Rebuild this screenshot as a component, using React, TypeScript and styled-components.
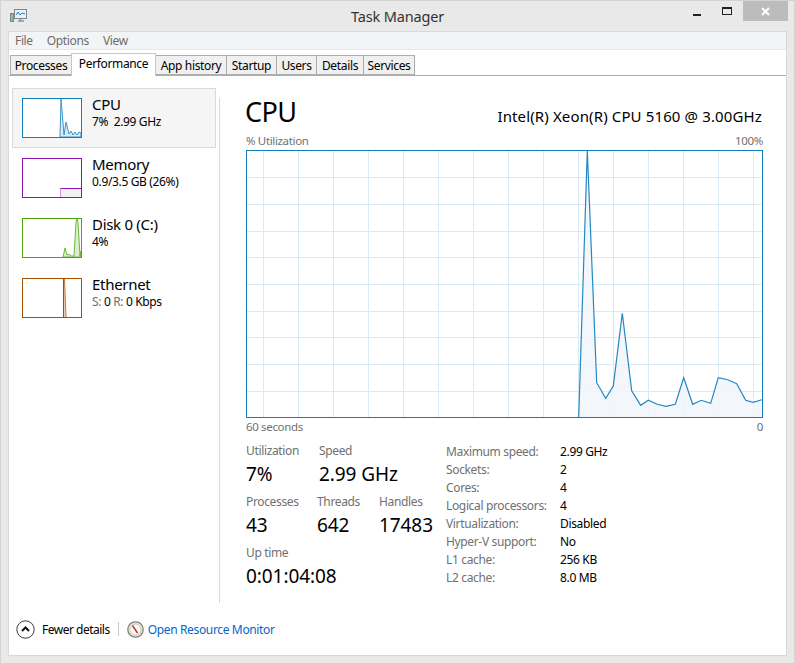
import React from "react";
import styled, { createGlobalStyle } from "styled-components";

const GlobalStyle = createGlobalStyle`
  html, body {
    margin: 0;
    padding: 0;
    background: #e9e9e9;
  }
  * {
    box-sizing: border-box;
  }
`;

const tabs = [
  { label: "Processes", width: 62 },
  { label: "Performance", width: 85, active: true },
  { label: "App history", width: 72 },
  { label: "Startup", width: 51 },
  { label: "Users", width: 41 },
  { label: "Details", width: 48 },
  { label: "Services", width: 52 },
];

const grid = {
  xs: [17, 52, 87, 122, 157, 192, 227, 262, 297, 332, 367, 402, 437, 472, 507],
  ys: [27, 54, 81, 107, 134, 161, 187, 214, 241],
};

// points read off the reference, relative to the inside of the chart
const cpuPoints =
  "332.7,267 341.3,0.7 350.7,232.7 359.7,248.3 367.3,236 376.3,163.3 385.7,240.7 394.7,255.3 402.3,250.3 411.3,254.3 420,256.3 429.3,254.3 437.7,227.7 446.7,254.3 455.3,250.3 464.7,253.3 472.3,227.7 481.7,229.7 490.7,233.7 499.7,250.3 507.3,252.3 515.7,249.7";

const stats = [
  ["Maximum speed:", "2.99 GHz"],
  ["Sockets:", "2"],
  ["Cores:", "4"],
  ["Logical processors:", "4"],
  ["Virtualization:", "Disabled"],
  ["Hyper-V support:", "No"],
  ["L1 cache:", "256 KB"],
  ["L2 cache:", "8.0 MB"],
];

const AppIcon = () => (
  <svg width="17" height="15" viewBox="0 0 17 15">
    <rect x="0.5" y="4.5" width="3" height="8" fill="#9fb59a" stroke="#7b8a80" />
    <rect x="4.5" y="0.5" width="12" height="9" fill="#e8f1f8" stroke="#7c8790" />
    <path d="M6 6l2-3 2 3 2-2 3 1" fill="none" stroke="#2b7fc0" />
    <path d="M8 12h6M10.500 10v2" stroke="#8b9299" strokeWidth="1.500" />
  </svg>
);

const ChevronCircle = () => (
  <svg width="19" height="19" viewBox="0 0 19 19">
    <circle cx="9.500" cy="9.500" r="8.700" fill="#fff" stroke="#3a3a3a" />
    <path d="M6 11l3.500-3.500L13 11" fill="none" stroke="#111" strokeWidth="2" />
  </svg>
);

const GaugeIcon = () => (
  <svg width="17" height="17" viewBox="0 0 17 17">
    <circle cx="8.500" cy="8.500" r="7.700" fill="#efefef" stroke="#8a8172" strokeWidth="1.300" />
    <circle cx="8.500" cy="8.500" r="5.600" fill="#fbfbfb" stroke="#c4c0b8" />
    <path d="M5.500 4.500l5 7.500" stroke="#c4352b" strokeWidth="1.500" />
  </svg>
);

const App = () => (
  <>
    <GlobalStyle />
    <Frame>
      <TitleBar>
        <AppIcon />
        <Title>Task Manager</Title>
        <WindowButtons>
          <WindowButton>
            <Minimize />
          </WindowButton>
          <WindowButton>
            <Maximize />
          </WindowButton>
          <CloseButton>
            <svg width="9" height="9" viewBox="0 0 9 9">
              <path d="M1 1l7 7M8 1L1 8" stroke="#fff" strokeWidth="2" />
            </svg>
          </CloseButton>
        </WindowButtons>
      </TitleBar>

      <Client>
        <MenuBar>
          <MenuItem>File</MenuItem>
          <MenuItem>Options</MenuItem>
          <MenuItem>View</MenuItem>
        </MenuBar>

        <TabBar>
          {tabs.map((tab) => (
            <Tab key={tab.label} $width={tab.width} $active={tab.active}>
              {tab.label}
            </Tab>
          ))}
        </TabBar>

        <Body>
          <Sidebar>
            <SideItem $selected>
              <Thumb $color="#117dbb">
                <svg width="58" height="38" viewBox="0 0 58 38">
                  <path
                    d="M37 38L38 0 41 36 43 23 46 35 48 32 50 36 52 33 54 36 56 33 58 34V38Z"
                    fill="#dcebf5"
                    stroke="#3b95c9"
                  />
                </svg>
              </Thumb>
              <SideText>
                <SideName>CPU</SideName>
                <SideValue>7%&nbsp; 2.99 GHz</SideValue>
              </SideText>
            </SideItem>
            <SideItem>
              <Thumb $color="#8b12ae">
                <svg width="58" height="38" viewBox="0 0 58 38">
                  <path d="M37.500 38V29.500H58V38Z" fill="#f3eff5" />
                  <path d="M37.500 38V29.500" fill="none" stroke="#c59ad6" />
                  <path d="M37.500 29.500H58" fill="none" stroke="#8b12ae" />
                </svg>
              </Thumb>
              <SideText>
                <SideName>Memory</SideName>
                <SideValue>0.9/3.5 GB (26%)</SideValue>
              </SideText>
            </SideItem>
            <SideItem>
              <Thumb $color="#4da60c">
                <svg width="58" height="38" viewBox="0 0 58 38">
                  <path
                    d="M40 38L42 29 44 36 46 35 48 37H51L53 3 54 0 55 3 57 37 58 32V38Z"
                    fill="#dcedd0"
                    stroke="#6cb83a"
                  />
                </svg>
              </Thumb>
              <SideText>
                <SideName>Disk 0 (C:)</SideName>
                <SideValue>4%</SideValue>
              </SideText>
            </SideItem>
            <SideItem>
              <Thumb $color="#a74f01">
                <svg width="58" height="38" viewBox="0 0 58 38">
                  <path d="M40.500 38V0H41.500L43 38Z" fill="#eecfb4" />
                  <path d="M40.500 38V0" stroke="#a74f01" />
                  <path d="M41.500 0L43 38" stroke="#c47a3d" fill="none" />
                </svg>
              </Thumb>
              <SideText>
                <SideName>Ethernet</SideName>
                <SideValue>
                  <Muted>S:</Muted> 0 <Muted>R:</Muted> 0 Kbps
                </SideValue>
              </SideText>
            </SideItem>
          </Sidebar>

          <Divider />

          <Main>
            <Heading>
              <BigTitle>CPU</BigTitle>
              <Model>Intel(R) Xeon(R) CPU 5160 @ 3.00GHz</Model>
            </Heading>

            <AxisRow $gapBelow={2}>
              <span>% Utilization</span>
              <span>100%</span>
            </AxisRow>
            <Chart>
              <svg width="515" height="266" viewBox="1 1 515 266">
                {grid.xs.map((x) => (
                  <line key={x} x1={x + 0.5} x2={x + 0.5} y1="0" y2="267" stroke="#d9eaf4" />
                ))}
                {grid.ys.map((y) => (
                  <line key={y} x1="0" x2="516" y1={y + 0.5} y2={y + 0.5} stroke="#d9eaf4" />
                ))}
                <polygon points={`${cpuPoints} 516,267`} fill="#f1f6fa" fillOpacity="0.85" />
                <polyline points={cpuPoints} fill="none" stroke="#2288c2" strokeWidth="1.200" />
              </svg>
            </Chart>
            <AxisRow $gapAbove={2}>
              <span>60 seconds</span>
              <span>0</span>
            </AxisRow>

            <Details>
              <LiveStats>
                <StatRow>
                  <Stat $width={73}>
                    <StatLabel>Utilization</StatLabel>
                    <StatValue>7%</StatValue>
                  </Stat>
                  <Stat>
                    <StatLabel>Speed</StatLabel>
                    <StatValue>2.99 GHz</StatValue>
                  </Stat>
                </StatRow>
                <StatRow>
                  <Stat $width={71}>
                    <StatLabel>Processes</StatLabel>
                    <StatValue>43</StatValue>
                  </Stat>
                  <Stat $width={62}>
                    <StatLabel>Threads</StatLabel>
                    <StatValue>642</StatValue>
                  </Stat>
                  <Stat>
                    <StatLabel>Handles</StatLabel>
                    <StatValue>17483</StatValue>
                  </Stat>
                </StatRow>
                <StatRow>
                  <Stat>
                    <StatLabel>Up time</StatLabel>
                    <StatValue>0:01:04:08</StatValue>
                  </Stat>
                </StatRow>
              </LiveStats>
              <SpecTable>
                {stats.map(([label, value]) => (
                  <React.Fragment key={label}>
                    <SpecLabel>{label}</SpecLabel>
                    <SpecValue>{value}</SpecValue>
                  </React.Fragment>
                ))}
              </SpecTable>
            </Details>
          </Main>
        </Body>

        <Footer>
          <ChevronCircle />
          <FooterText>Fewer details</FooterText>
          <FooterSeparator />
          <GaugeIcon />
          <FooterLink>Open Resource Monitor</FooterLink>
        </Footer>
      </Client>
    </Frame>
  </>
);

export default App;

const Frame = styled.div`
  width: 795px;
  height: 664px;
  display: flex;
  flex-direction: column;
  background: #e9e9e9;
  border: 1px solid #d3d3d3;
  overflow: hidden;
  font-family: "Noto Sans", "Open Sans", sans-serif;
  font-size: 12px;
  letter-spacing: -0.35px;
  color: #000;
`;

const TitleBar = styled.div`
  position: relative;
  height: 30px;
  flex: none;
  display: flex;
  align-items: center;
  padding: 0 0 0 9px;
`;

const Title = styled.div`
  position: absolute;
  left: 0;
  right: 0;
  top: 6px;
  text-align: center;
  font-size: 14.500px;
  line-height: 18px;
  letter-spacing: -0.15px;
  color: #333;
`;

const WindowButtons = styled.div`
  position: absolute;
  top: 0;
  right: 6px;
  display: flex;
`;

const WindowButton = styled.div`
  width: 30px;
  height: 20px;
  margin-right: 0;
  display: flex;
  align-items: center;
  justify-content: center;
`;

const Minimize = styled.div`
  width: 8px;
  height: 2px;
  margin: 7px 0 0;
  background: #222;
`;

const Maximize = styled.div`
  width: 10px;
  height: 8px;
  margin-top: -1px;
  border: 1px solid #222;
  border-top-width: 2px;
`;

const CloseButton = styled.div`
  width: 45px;
  height: 20px;
  margin-left: 1px;
  background: #bcbcbc;
  display: flex;
  align-items: center;
  justify-content: center;
`;

const Client = styled.div`
  flex: 1;
  min-height: 0;
  margin: 0 7px 7px;
  display: flex;
  flex-direction: column;
  background: #fff;
  border: 1px solid #d9d9d9;
`;

const MenuBar = styled.div`
  height: 18px;
  flex: none;
  display: flex;
  align-items: center;
  gap: 14px;
  padding: 0 6px;
  background: #f3f4f6;
  border-bottom: 1px solid #e8e8e8;
`;

const MenuItem = styled.span`
  color: #6d6d6d;
`;

const TabBar = styled.div`
  height: 26px;
  flex: none;
  display: flex;
  align-items: flex-end;
  padding: 0 2px;
  margin-top: 0;
  border-bottom: 1px solid #adadad;
`;

const Tab = styled.div<{ $width: number; $active?: boolean }>`
  width: ${(p) => p.$width}px;
  height: ${(p) => (p.$active ? 23 : 20)}px;
  margin-bottom: ${(p) => (p.$active ? -1 : 0)}px;
  padding-top: ${(p) => (p.$active ? 1 : 0)}px;
  display: flex;
  align-items: ${(p) => (p.$active ? "flex-start" : "center")};
  justify-content: center;
  white-space: nowrap;
  background: ${(p) => (p.$active ? "#fff" : "#f0f0f0")};
  border: 1px solid ${(p) => (p.$active ? "#c6c6c6" : "#adadad")};
  border-bottom: ${(p) => (p.$active ? "none" : "1px solid #adadad")};
  margin-left: -1px;
  position: relative;
  z-index: ${(p) => (p.$active ? 1 : 0)};
`;

const Body = styled.div`
  flex: 1;
  min-height: 0;
  display: flex;
`;

const Sidebar = styled.div`
  width: 210px;
  flex: none;
  padding: 12px 3px 0 3px;
`;

const SideItem = styled.div<{ $selected?: boolean }>`
  height: 60px;
  display: flex;
  align-items: flex-start;
  gap: 10px;
  padding: 9px 0 0 9px;
  background: ${(p) => (p.$selected ? "#f5f5f5" : "transparent")};
  border: 1px solid ${(p) => (p.$selected ? "#d9d9d9" : "transparent")};
`;

const Thumb = styled.div<{ $color: string }>`
  width: 60px;
  height: 40px;
  flex: none;
  border: 1px solid ${(p) => p.$color};
  background: #fff;
  overflow: hidden;

  svg {
    display: block;
  }
`;

const SideText = styled.div`
  display: flex;
  flex-direction: column;
`;

const SideName = styled.div`
  font-size: 15px;
  line-height: 18px;
  margin-top: -3px;
  letter-spacing: -0.3px;
`;

const SideValue = styled.div`
  line-height: 17px;
`;

const Muted = styled.span`
  color: #707070;
`;

const Divider = styled.div`
  width: 1px;
  flex: none;
  margin-top: 22px;
  background: #d9d9d9;
`;

const Main = styled.div`
  flex: 1;
  min-width: 0;
  padding: 0 24px 0 26px;
`;

const Heading = styled.div`
  height: 58px;
  padding-top: 18px;
  display: flex;
  align-items: flex-start;
  justify-content: space-between;
`;

const BigTitle = styled.div`
  font-size: 27px;
  line-height: 36px;
  letter-spacing: -0.6px;
  margin-left: -1px;
`;

const Model = styled.div`
  font-size: 15px;
  line-height: 20px;
  margin-top: 12px;
  letter-spacing: 0.13px;
`;

const AxisRow = styled.div<{ $gapAbove?: number; $gapBelow?: number }>`
  height: 14px;
  margin: ${(p) => p.$gapAbove ?? 0}px -1px ${(p) => p.$gapBelow ?? 0}px 0;
  display: flex;
  justify-content: space-between;
  align-items: center;
  color: #707070;
  font-size: 11.500px;
  line-height: 14px;
`;

const Chart = styled.div`
  width: 517px;
  height: 268px;
  border: 1px solid #117dbb;
  background: #fff;

  svg {
    display: block;
  }
`;

const Details = styled.div`
  display: flex;
  margin-top: 9px;
`;

const LiveStats = styled.div`
  width: 200px;
  flex: none;
`;

const StatRow = styled.div`
  display: flex;
  height: 51px;
`;

const Stat = styled.div<{ $width?: number }>`
  width: ${(p) => (p.$width ? `${p.$width}px` : "auto")};
`;

const StatLabel = styled.div`
  color: #707070;
  line-height: 16px;
`;

const StatValue = styled.div`
  font-size: 19px;
  line-height: 26px;
  margin-top: 2px;
  letter-spacing: -0.08px;
`;

const SpecTable = styled.div`
  display: grid;
  grid-template-columns: 114px auto;
  grid-auto-rows: 18px;
  align-items: center;
  align-content: start;
  margin-top: -1px;
`;

const SpecLabel = styled.div`
  color: #707070;
`;

const SpecValue = styled.div`
  color: #000;
`;

const Footer = styled.div`
  height: 52px;
  flex: none;
  display: flex;
  align-items: center;
  padding: 0 0 0 7px;
`;

const FooterText = styled.span`
  margin-left: 7px;
  letter-spacing: -0.5px;
`;

const FooterSeparator = styled.div`
  width: 1px;
  height: 14px;
  margin: 0 8px 0 8px;
  background: #c8c8c8;
`;

const FooterLink = styled.span`
  margin-left: 4px;
  color: #0066cc;
`;
